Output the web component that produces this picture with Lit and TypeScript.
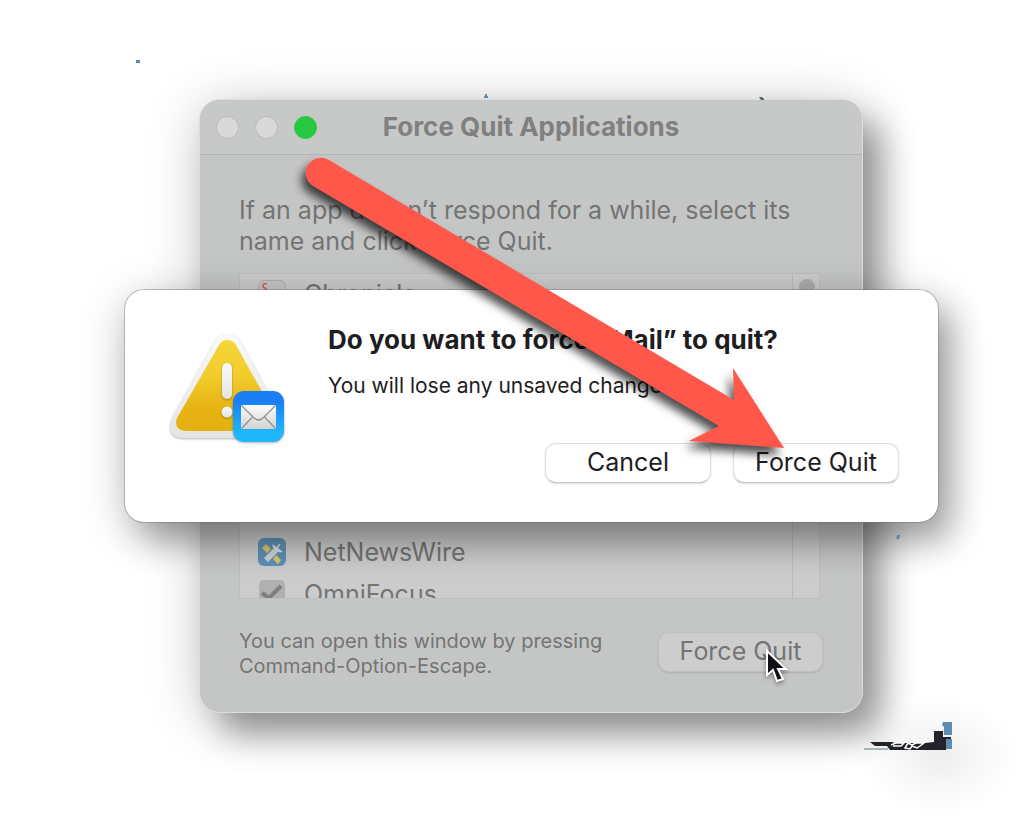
import { LitElement, html, css, svg } from "lit";
import { customElement } from "lit/decorators.js";

@customElement("warning-mail-icon")
class WarningMailIcon extends LitElement {
  static styles = css`
    :host { display: block; }
    .icon { display: block; width: 120px; height: 114px; overflow: visible; }
    .lift { filter: drop-shadow(0 1px 1px rgba(0, 0, 0, 0.3)); }
  `;

  render() {
    return html`
      <svg class="icon" viewBox="0 0 120 114" role="img" aria-label="Warning from Mail">
        <defs>
          <linearGradient id="rim" x1="0" y1="0" x2="0" y2="1">
            <stop offset="0" stop-color="#fafafa" />
            <stop offset="1" stop-color="#e4e4e4" />
          </linearGradient>
          <linearGradient id="gold" x1="0" y1="0" x2="0" y2="1">
            <stop offset="0" stop-color="#f6d63c" />
            <stop offset="0.4" stop-color="#f1cc2b" />
            <stop offset="0.75" stop-color="#e6b313" />
            <stop offset="1" stop-color="#e5b112" />
          </linearGradient>
          <linearGradient id="sky" x1="0" y1="0" x2="0" y2="1">
            <stop offset="0.2" stop-color="#1b7ff3" />
            <stop offset="0.8" stop-color="#1fb6fc" />
          </linearGradient>
          <linearGradient id="paper" x1="0" y1="0" x2="0" y2="1">
            <stop offset="0" stop-color="#fdfdfd" />
            <stop offset="1" stop-color="#d2d2d2" />
          </linearGradient>
        </defs>
        <path class="lift" fill="url(#rim)"
          d="M47 7 Q51 0 59 0 Q68 0 72 7 L113 81 Q121 104 104 104 L15 104 Q-3 103 4 84 Z" />
        <path fill="url(#gold)"
          d="M51 11 Q54 6 59 6 Q65 6 68 11 L107 81 Q112 97 99 97 L18 97 Q5 96 9 84 Z" />
        <rect class="lift" x="54" y="29" width="10" height="36" rx="5" fill="url(#rim)" />
        <circle class="lift" cx="59" cy="78" r="5.500" fill="url(#rim)" />
        <rect class="lift" x="65" y="57" width="51" height="51" rx="11" fill="url(#sky)" />
        <rect x="73" y="71" width="35" height="24" rx="2" fill="url(#paper)" />
        <g fill="none" stroke="#8f8f8f" stroke-width="1.200">
          <path d="M74 72 L86 84 Q90.500 88 95 84 L107 72" />
          <path d="M74 94 L84.500 83" />
          <path d="M107 94 L96.500 83" />
        </g>
      </svg>
    `;
  }
}

const chronicleIcon = svg`
  <rect x="0.500" y="0.500" width="27" height="27" rx="6" fill="#c6c6c6" stroke="#adadad" />
  <path d="M9 4 Q5 3 5 6 Q5 8 7 8 Q9 9 8 11 Q6 12 4 11" fill="none" stroke="#d2605d" stroke-width="1.500" />
`;

const netNewsWireIcon = svg`
  <rect x="0" y="0" width="28" height="28" rx="6" fill="#5f91b8" />
  <path d="M4 10 L8 6 L13 11 L9 15 Z" fill="#d8c66e" />
  <path d="M15 21 L18 17 L23 22 L20 26 Z" fill="#e0c961" />
  <path d="M6 20 L16 10 L20 14 L10 24 Z" fill="#d0d3d5" />
  <path d="M14 6 Q16 16 25 14 L20 10 Z" fill="#dadddf" />
  <path d="M19 10 L22 6" stroke="#dadddf" stroke-width="1.500" />
`;

const omniFocusIcon = svg`
  <rect x="1" y="0" width="26" height="28" rx="5" fill="#b0b0b0" />
  <path d="M4 13 L11 18 L23 6" fill="none" stroke="#7f7f7f" stroke-width="4" />
`;

@customElement("force-quit-dialog")
class ForceQuitDialog extends LitElement {
  static styles = css`
    :host { display: block; }
    .dialog {
      box-sizing: border-box;
      display: flex;
      gap: 40px;
      min-height: 232px;
      padding: 34px 39px 39px 43px;
      border-radius: 19px;
      background: #fff;
      color: #1d1d22;
      box-shadow:
        0 0 0 1px rgba(110, 110, 110, 0.4),
        14px 20px 34px rgba(0, 0, 0, 0.3),
        0 8px 48px rgba(0, 0, 0, 0.2);
    }
    .art { padding-top: 10px; }
    .content { flex: 1; display: flex; flex-direction: column; }
    .question { margin: 0; font-size: 26px; line-height: 32px; font-weight: 700; }
    .detail { margin: 18px 0 0; font-size: 21px; line-height: 24px; }
    .actions { display: flex; justify-content: flex-end; gap: 22px; margin-top: auto; }
    .action {
      width: 166px;
      height: 40px;
      padding: 0 0 3px;
      border: 1px solid #dedede;
      border-bottom-color: #c9c9c9;
      border-radius: 11px;
      background: #fff;
      color: #1d1d22;
      font: inherit;
      font-size: 25px;
      box-shadow: 0 1px 2px rgba(0, 0, 0, 0.14);
    }
  `;

  render() {
    return html`
      <section class="dialog" role="alertdialog" aria-labelledby="question" aria-describedby="detail">
        <warning-mail-icon class="art"></warning-mail-icon>
        <div class="content">
          <h2 class="question" id="question">Do you want to force “Mail” to quit?</h2>
          <p class="detail" id="detail">You will lose any unsaved changes.</p>
          <div class="actions">
            <button class="action" type="button">Cancel</button>
            <button class="action" type="button">Force Quit</button>
          </div>
        </div>
      </section>
    `;
  }
}

@customElement("app-root")
class AppRoot extends LitElement {
  static styles = css`
    :host {
      display: block;
      font-family: Inter, "Liberation Sans", sans-serif;
      background: #fff;
    }
    .desktop {
      box-sizing: border-box;
      display: grid;
      justify-items: center;
      align-content: start;
      min-height: 100vh;
      padding: 100px 0 0 38px;
      overflow: hidden;
    }
    .window {
      position: relative;
      box-sizing: border-box;
      width: 662px;
      max-width: 100%;
      min-height: 612px;
      display: flex;
      flex-direction: column;
      border-radius: 20px;
      background: #c4c6c5;
      color: #747474;
      box-shadow:
        0 0 0 1px #dcdedd,
        20px 22px 34px rgba(0, 0, 0, 0.36),
        0 6px 54px rgba(0, 0, 0, 0.22);
    }
    .titlebar {
      display: grid;
      grid-template-columns: 120px 1fr 120px;
      align-items: center;
      height: 54px;
      padding: 0 16px;
      border-bottom: 1px solid #b3b5b4;
      border-radius: 20px 20px 0 0;
      background: #c7c9c8;
    }
    .lights { display: flex; gap: 16px; }
    .light {
      box-sizing: border-box;
      width: 23px;
      height: 23px;
      padding: 0;
      border: 1px solid #b9bbba;
      border-radius: 50%;
      background: #d8d9d8;
    }
    .zoom { border-color: #28c840; background: #28c840; }
    .title {
      margin: 0;
      color: #808080;
      font-size: 26px;
      line-height: 32px;
      font-weight: 700;
      text-align: center;
      white-space: nowrap;
    }
    .body { display: flex; flex-direction: column; padding: 40px 39px 32px; }
    .hint { margin: 0; font-size: 25px; line-height: 31px; }
    .list {
      display: grid;
      grid-template-columns: 1fr 27px;
      height: 326px;
      margin: 16px 3px 0 0;
      border: 1px solid #bdbfbe;
      box-sizing: border-box;
      background: #cbcccb;
      overflow: hidden;
    }
    .rows {
      display: flex;
      flex-direction: column;
      gap: 2px;
      margin: 0;
      padding: 0 0 0 18px;
      list-style: none;
    }
    .row { display: flex; align-items: center; gap: 18px; height: 40px; flex: none; font-size: 25px; }
    .later { margin-top: 216px; }
    .app-icon { width: 28px; height: 28px; flex: none; }
    .scroller { padding: 5px 6px; border-left: 1px solid #bbbdbc; }
    .thumb { height: 60px; width: 16px; border-radius: 8px; background: #acadac; }
    .footer { display: flex; justify-content: space-between; align-items: flex-start; margin-top: 30px; }
    .note { margin: 0; font-size: 20px; line-height: 25px; }
    .quit {
      width: 165px;
      height: 40px;
      margin-top: 3px;
      padding: 0 0 3px;
      border: 1px solid #c0c0c0;
      border-radius: 11px;
      background: #cdcdcd;
      color: #747474;
      font: inherit;
      font-size: 25px;
      box-shadow: 0 1px 2px rgba(0, 0, 0, 0.12);
    }
    .alert { position: absolute; left: -75px; right: -76px; top: 190px; }
    .overlay {
      position: absolute;
      left: -200px;
      top: -100px;
      width: 1024px;
      height: 822px;
      pointer-events: none;
    }
    .arrow { filter: drop-shadow(-4px 7px 5px rgba(0, 0, 0, 0.7)); }
    .pointer { filter: drop-shadow(0 2px 2px rgba(0, 0, 0, 0.4)); }
  `;

  private row(icon: unknown, name: string, later = "") {
    return html`
      <li class="row ${later}">
        <svg class="app-icon" viewBox="0 0 28 28" aria-hidden="true">${icon}</svg>
        <span>${name}</span>
      </li>
    `;
  }

  render() {
    return html`
      <main class="desktop">
        <section class="window" aria-labelledby="title">
          <header class="titlebar">
            <div class="lights">
              <button class="light" type="button" aria-label="Close"></button>
              <button class="light" type="button" aria-label="Minimize"></button>
              <button class="light zoom" type="button" aria-label="Zoom"></button>
            </div>
            <h1 class="title" id="title">Force Quit Applications</h1>
          </header>
          <div class="body">
            <p class="hint">If an app doesn’t respond for a while, select its<br />name and click Force Quit.</p>
            <div class="list">
              <ul class="rows">
                ${this.row(chronicleIcon, "Chronicle")}
                ${this.row(netNewsWireIcon, "NetNewsWire", "later")}
                ${this.row(omniFocusIcon, "OmniFocus")}
              </ul>
              <div class="scroller"><div class="thumb"></div></div>
            </div>
            <div class="footer">
              <p class="note">You can open this window by pressing<br />Command-Option-Escape.</p>
              <button class="quit" type="button">Force Quit</button>
            </div>
          </div>
          <force-quit-dialog class="alert"></force-quit-dialog>
          <svg class="overlay" viewBox="0 0 1024 822" aria-hidden="true">
            <defs>
              <radialGradient id="glow">
                <stop offset="0" stop-color="#000" stop-opacity="0.07" />
                <stop offset="0.5" stop-color="#000" stop-opacity="0.03" />
                <stop offset="1" stop-color="#000" stop-opacity="0" />
              </radialGradient>
            </defs>
            <ellipse cx="940" cy="756" rx="80" ry="60" fill="url(#glow)" />
            <g fill="#5c8db0">
              <path d="M136 60h4v3h-4z" />
              <path d="M484 96h1v-2h2v2h1v2h-4z" />
              <path d="M896 538l1-3h3v2l-2 3z" />
              <path d="M943 722h9v13h-8v-8l-2-2z" />
              <path d="M945 739h7v10h-7z" />
            </g>
            <path d="M759 97h3l2 2v1h-3z" fill="#55646c" />
            <path d="M864 748h24v2h-24z" fill="#a3b8b4" />
            <path d="M870 742h22l3 1h30l9-1v-11h9v6h8v2h-5v11h-56l-3-4h-12z" fill="#22232b" />
            <path d="M891 745l5-2h8l-3 3h-8M905 748l3-5 4 2 4-2h8l-4 3-3 2-5-2-2 3z" fill="none" stroke="#fff" stroke-width="1.500" />
            <path class="arrow" fill="#ff584b"
              d="M784 448 L733 368 L734 400 L329 160 A15 15 0 0 0 313 186 L719 426 L689 441 Z" />
            <path class="pointer" fill="#101114" stroke="#fff" stroke-width="2" stroke-linejoin="miter"
              d="M767 651 L767 675 L773 670 L777 681 L783 679 L778 669 L786 669 Z" />
          </svg>
        </section>
      </main>
    `;
  }
}
